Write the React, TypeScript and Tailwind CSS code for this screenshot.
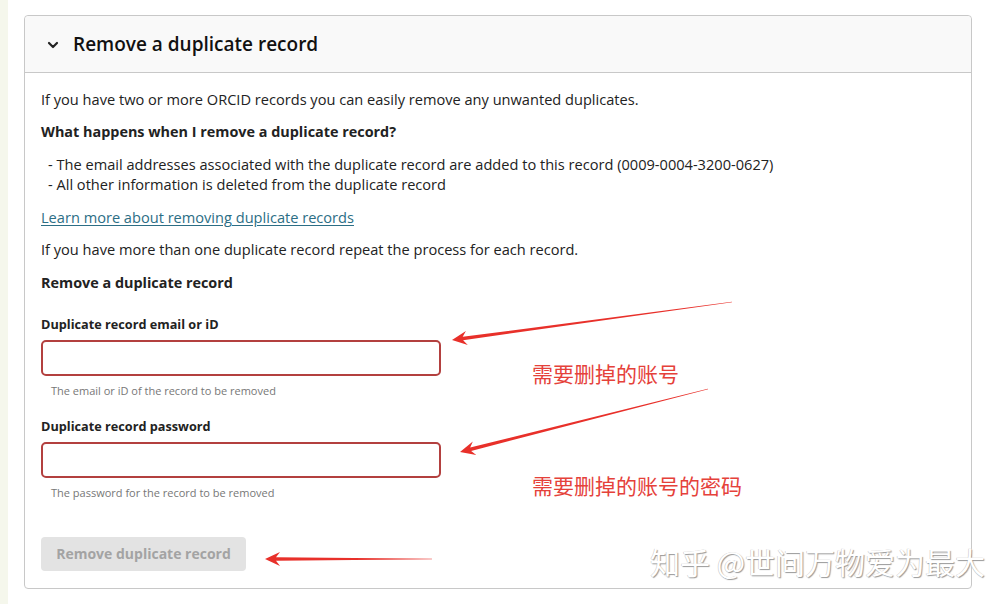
import React from "react";

type Pt = [number, number];

function arrowPoints(tail: Pt, tip: Pt, headLen = 15, headW = 7, shaftW = 3.4): string {
  const dx = tail[0] - tip[0];
  const dy = tail[1] - tip[1];
  const len = Math.hypot(dx, dy);
  const ux = dx / len;
  const uy = dy / len;
  const nx = -uy;
  const ny = ux;
  const p = (x: number, y: number) => `${x.toFixed(1)},${y.toFixed(1)}`;
  const b = headLen - 4;
  return [
    p(tip[0], tip[1]),
    p(tip[0] + ux * headLen + nx * headW, tip[1] + uy * headLen + ny * headW),
    p(tip[0] + ux * b + (nx * shaftW) / 2, tip[1] + uy * b + (ny * shaftW) / 2),
    p(tail[0] + nx * 0.3, tail[1] + ny * 0.3),
    p(tail[0] - nx * 0.3, tail[1] - ny * 0.3),
    p(tip[0] + ux * b - (nx * shaftW) / 2, tip[1] + uy * b - (ny * shaftW) / 2),
    p(tip[0] + ux * headLen - nx * headW, tip[1] + uy * headLen - ny * headW),
  ].join(" ");
}

export default function App() {
  const font = { fontFamily: '"Open Sans", "Noto Sans", "Noto Sans CJK SC", sans-serif' };
  return (
    <div className="relative w-[1008px] h-[604px] bg-white overflow-hidden flex" style={font}>
      <div className="w-[8px] h-full bg-[#f5f7ec]" />
      <div className="pl-[16px] pt-[15px]">
        <div className="w-[948px] h-[574px] border border-[#c8c8c8] rounded-[4px] bg-white flex flex-col">
          <div className="h-[57px] bg-[#f9f9f9] border-b border-[#c8c8c8] rounded-t-[4px] flex items-center pl-[21px]">
            <svg width="14" height="14" viewBox="0 0 14 14" className="mr-[13px] mt-[2px]">
              <path d="M3 5 L7 9 L11 5" fill="none" stroke="#222" strokeWidth="2.2" strokeLinecap="round" strokeLinejoin="round" />
            </svg>
            <span className="text-[19px] font-semibold text-[#111] leading-[24px]">Remove a duplicate record</span>
          </div>
          <div className="pl-[16px] pt-[16px] text-[14.6px] leading-[20px] text-[#222]">
            <p>If you have two or more ORCID records you can easily remove any unwanted duplicates.</p>
            <p className="mt-[13px] font-bold text-[14.4px]">What happens when I remove a duplicate record?</p>
            <div className="mt-[12px] pl-[7px]">
              <p>- The email addresses associated with the duplicate record are added to this record (0009-0004-3200-0627)</p>
              <p>- All other information is deleted from the duplicate record</p>
            </div>
            <p className="mt-[13px]">
              <a className="text-[#2c6e85] underline underline-offset-2">Learn more about removing duplicate records</a>
            </p>
            <p className="mt-[12px]">If you have more than one duplicate record repeat the process for each record.</p>
            <p className="mt-[14px] font-bold text-[14.4px]">Remove a duplicate record</p>
            <label className="block mt-[22px] text-[12.7px] leading-[18px] font-bold">Duplicate record email or iD</label>
            <div className="mt-[7px] w-[400px] h-[36px] border-2 border-[#b3403f] rounded-[5px]" />
            <p className="mt-[8px] pl-[10px] text-[11px] leading-[14px] text-[#777]">The email or iD of the record to be removed</p>
            <label className="block mt-[19px] text-[12.7px] leading-[18px] font-bold">Duplicate record password</label>
            <div className="mt-[7px] w-[400px] h-[36px] border-2 border-[#b3403f] rounded-[5px]" />
            <p className="mt-[8px] pl-[10px] text-[11px] leading-[14px] text-[#777]">The password for the record to be removed</p>
            <button className="mt-[37px] w-[205px] h-[34px] rounded-[4px] bg-[#e3e3e3] text-[#a3a3a3] text-[14px] font-bold">
              Remove duplicate record
            </button>
          </div>
        </div>
      </div>

      <svg className="absolute left-0 top-0 pointer-events-none" width="1008" height="604">
        <polygon points={arrowPoints([732, 302], [452, 340])} fill="#e8302a" />
        <polygon points={arrowPoints([708, 389], [460, 452])} fill="#e8302a" />
        <polygon points={arrowPoints([432, 559], [265, 559])} fill="#e8302a" />
      </svg>

      <div
        className="absolute left-[532px] top-[360px] text-[21px] leading-[26px] text-[#e5413a] whitespace-nowrap"
        style={{ fontFamily: '"Noto Sans CJK SC", sans-serif' }}
      >
        需要删掉的账号
      </div>
      <div
        className="absolute left-[532px] top-[472px] text-[21px] leading-[26px] text-[#e5413a] whitespace-nowrap"
        style={{ fontFamily: '"Noto Sans CJK SC", sans-serif' }}
      >
        需要删掉的账号的密码
      </div>
      <div
        className="absolute left-[650px] top-[542px] text-[30px] leading-[38px] text-white whitespace-nowrap [text-shadow:1px_1px_1px_#999999,-0.5px_-0.5px_0.5px_#c4c4c4]"
        style={{ fontFamily: '"Noto Sans CJK SC", sans-serif' }}
      >
        知乎 @世间万物爱为最大
      </div>
    </div>
  );
}
